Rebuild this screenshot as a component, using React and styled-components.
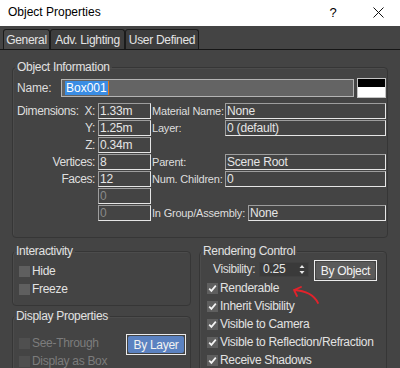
import React from 'react';
import styled, { createGlobalStyle } from 'styled-components';

const GlobalStyle = createGlobalStyle`
  html, body { margin: 0; padding: 0; background: #444444; }
  body {
    font-family: "Liberation Sans", Arial, sans-serif;
    font-size: 11px;
    letter-spacing: -0.2px;
    color: #dedede;
  }
  * { box-sizing: border-box; }
`;

const Window = styled.div`
  position: relative;
  width: 400px;
  height: 368px;
  overflow: hidden;
  background: #444444;
  white-space: nowrap;
`;

const TitleBar = styled.div`
  height: 26px;
  background: #ffffff;
  display: flex;
  align-items: center;
  padding-left: 8px;
  color: #000;
  letter-spacing: 0;
`;

const Title = styled.div`
  flex: 1;
  font-size: 12px;
  margin-top: -2px;
`;

const TitleButton = styled.div`
  width: ${p => p.$w}px;
  height: 26px;
  display: flex;
  align-items: center;
  justify-content: center;
  font-size: 13px;
  margin-top: -2px;
`;

const TabStrip = styled.div`
  height: 24px;
  display: flex;
  align-items: flex-end;
  padding-left: 3px;
  border-bottom: 1px solid #161616;
`;

const Tab = styled.div`
  width: ${p => p.$w}px;
  height: 20px;
  display: flex;
  align-items: center;
  justify-content: center;
  border: 1px solid #1b1b1b;
  border-bottom: none;
  border-radius: 3px 3px 0 0;
  background: ${p => (p.$active ? '#4a4a4a' : '#3d3d3d')};
  color: #e4e4e4;
  font-size: 12px;
  letter-spacing: -0.3px;
`;

const Pane = styled.div`
  padding: 10px 12px 0 12px;
`;

const Group = styled.fieldset`
  margin: 0;
  min-width: 0;
  border: 1px solid #363636;
  border-radius: 4px;
  box-shadow: inset 1px 1px 0 #4c4c4c;
  padding: ${p => p.$pad};
`;

const Legend = styled.legend`
  padding: 0 2px;
  margin-left: ${p => p.$shift}px;
  font-size: 12px;
  line-height: 14px;
  letter-spacing: -0.3px;
  color: #e2e2e2;
`;

const NameRow = styled.div`
  display: flex;
  align-items: center;
  height: 19px;
`;

const NameLabel = styled.div`
  width: 44px;
  font-size: 12px;
`;

const NameField = styled.div`
  width: 293px;
  height: 18px;
  background: #646464;
  border: 1px solid #b4b4b4;
  display: flex;
  align-items: center;
  padding-left: 3px;
  font-size: 12px;
  letter-spacing: 0;
  color: #fff;
`;

const Selection = styled.span`
  background: #3a8de4;
  line-height: 14px;
  padding: 0 1px;
`;

const Caret = styled.span`
  width: 1px;
  height: 14px;
  background: #e07a1f;
`;

const Swatch = styled.div`
  width: 29px;
  height: 20px;
  margin-left: 3px;
  border: 1px solid #c4c4c4;
  background: linear-gradient(#000 0 42%, #fff 42% 100%);
`;

const InfoGrid = styled.div`
  display: grid;
  grid-template-columns: 81px 53px 1fr;
  grid-auto-rows: 16px;
  row-gap: 1px;
  margin-top: 6px;
`;

const LeftLabel = styled.div`
  display: flex;
  justify-content: ${p => (p.$split ? 'space-between' : 'flex-end')};
  align-items: center;
  padding-right: 3px;
  font-size: 12px;
  letter-spacing: -0.4px;
`;

const Field = styled.div`
  height: 16px;
  border: 1px solid #9e9e9e;
  border-right-color: #e6e6e6;
  border-bottom-color: #e6e6e6;
  padding-left: 1px;
  font-size: 12px;
  line-height: 14px;
  letter-spacing: -0.2px;
  color: ${p => (p.$dim ? '#8a8a8a' : '#e6e6e6')};
  flex: ${p => (p.$grow ? 1 : 'none')};
  overflow: hidden;
`;

const RightCell = styled.div`
  display: flex;
  align-items: center;
  padding-left: 1px;
`;

const RightLabel = styled.div`
  width: ${p => p.$w}px;
  font-size: 11px;
  overflow: hidden;
`;

const LowerGrid = styled.div`
  display: grid;
  grid-template-columns: 179px 188px;
  column-gap: 8px;
  margin-top: 6px;
  align-items: start;
`;

const Column = styled.div`
  display: flex;
  flex-direction: column;
  gap: 3px;
`;

const CheckRow = styled.div`
  height: 18px;
  display: flex;
  align-items: center;
  font-size: 12px;
  letter-spacing: -0.3px;
  color: ${p => (p.$disabled ? '#7c7c7c' : '#e2e2e2')};
`;

const Box = styled.span`
  width: 11px;
  height: 11px;
  margin-right: 2px;
  flex: none;
  background: ${p => (p.$disabled ? '#4f4f4f' : '#5f5f5f')};
  display: flex;
  align-items: center;
  justify-content: center;
`;

const DisplayBody = styled.div`
  display: flex;
  align-items: flex-start;
`;

const Checks = styled.div`
  flex: 1;
  display: flex;
  flex-direction: column;
`;

const Button = styled.div`
  width: ${p => p.$w}px;
  height: ${p => p.$h}px;
  border: 1px solid #ececec;
  padding: 1px;
  margin-left: ${p => p.$ml || 0}px;
  margin-top: ${p => p.$mt || 0}px;
  flex: none;
`;

const ButtonFace = styled.div`
  height: 100%;
  border-radius: 2px;
  background: ${p => (p.$blue ? '#5b82c1' : '#5a5a5a')};
  display: flex;
  align-items: center;
  justify-content: center;
  font-size: 12px;
  letter-spacing: -0.3px;
  color: #f2f2f2;
`;

const VisRow = styled.div`
  height: 20px;
  display: flex;
  align-items: center;
`;

const VisLabel = styled.div`
  width: 46px;
  margin-left: 6px;
  font-size: 12px;
  letter-spacing: -0.4px;
`;

const Spinner = styled.div`
  width: 50px;
  height: 15px;
  background: #3a3a3a;
  border: 1px solid #404040;
  display: flex;
  align-items: center;
  justify-content: space-between;
  padding: 0 3px 0 3px;
  font-size: 12px;
  color: #e6e6e6;
`;

const Arrow = styled.svg`
  position: absolute;
  left: 0;
  top: 0;
  pointer-events: none;
`;

const Check = ({ checked, disabled, children }) => (
  <CheckRow $disabled={disabled}>
    <Box $disabled={disabled}>
      {checked && (
        <svg width="9" height="9" viewBox="0 0 9 9">
          <path d="M1.2 4.6 L3.4 6.9 L7.8 1.6" stroke="#f4f4f4" strokeWidth="1.7" fill="none" />
        </svg>
      )}
    </Box>
    {children}
  </CheckRow>
);

export default function App() {
  return (
    <>
      <GlobalStyle />
      <Window>
        <TitleBar>
          <Title>Object Properties</Title>
          <TitleButton $w={46}>?</TitleButton>
          <TitleButton $w={44}>
            <svg width="11" height="11" viewBox="0 0 11 11">
              <path d="M0.5 0.5 L10.5 10.5 M10.5 0.5 L0.5 10.5" stroke="#111" strokeWidth="1" fill="none" />
            </svg>
          </TitleButton>
        </TitleBar>
        <TabStrip>
          <Tab $w={47} $active>General</Tab>
          <Tab $w={75}>Adv. Lighting</Tab>
          <Tab $w={74}>User Defined</Tab>
        </TabStrip>
        <Pane>
          <Group $pad="4px 1px 16px 4px">
            <Legend $shift={-2}>Object Information</Legend>
            <NameRow>
              <NameLabel>Name:</NameLabel>
              <NameField>
                <Selection>Box001</Selection>
                <Caret />
              </NameField>
              <Swatch />
            </NameRow>
            <InfoGrid>
              <LeftLabel $split><span>Dimensions:</span><span>X:</span></LeftLabel>
              <Field>1.33m</Field>
              <RightCell><RightLabel $w={73}>Material Name:</RightLabel><Field $grow>None</Field></RightCell>

              <LeftLabel>Y:</LeftLabel>
              <Field>1.25m</Field>
              <RightCell><RightLabel $w={73}>Layer:</RightLabel><Field $grow>0 (default)</Field></RightCell>

              <LeftLabel>Z:</LeftLabel>
              <Field>0.34m</Field>
              <RightCell />

              <LeftLabel>Vertices:</LeftLabel>
              <Field>8</Field>
              <RightCell><RightLabel $w={73}>Parent:</RightLabel><Field $grow>Scene Root</Field></RightCell>

              <LeftLabel>Faces:</LeftLabel>
              <Field>12</Field>
              <RightCell><RightLabel $w={73}>Num. Children:</RightLabel><Field $grow>0</Field></RightCell>

              <LeftLabel />
              <Field $dim>0</Field>
              <RightCell />

              <LeftLabel />
              <Field $dim>0</Field>
              <RightCell><RightLabel $w={96}>In Group/Assembly:</RightLabel><Field $grow>None</Field></RightCell>
            </InfoGrid>
          </Group>

          <LowerGrid>
            <Column>
              <Group $pad="4px 4px 7px 6px">
                <Legend $shift={-5}>Interactivity</Legend>
                <Check>Hide</Check>
                <Check>Freeze</Check>
              </Group>
              <Group $pad="11px 4px 10px 6px">
                <Legend $shift={-5}>Display Properties</Legend>
                <DisplayBody>
                  <Checks>
                    <Check disabled>See-Through</Check>
                    <Check disabled>Display as Box</Check>
                  </Checks>
                  <Button $w={60} $h={21}>
                    <ButtonFace $blue>By Layer</ButtonFace>
                  </Button>
                </DisplayBody>
              </Group>
            </Column>
            <Group $pad="1px 4px 10px 7px">
              <Legend $shift={-6}>Rendering Control</Legend>
              <VisRow>
                <VisLabel>Visibility:</VisLabel>
                <Spinner>
                  <span>0.25</span>
                  <svg width="6" height="11" viewBox="0 0 6 11">
                    <path d="M3 1 L5.5 4 L0.5 4 Z M3 10 L5.5 7 L0.5 7 Z" fill="#e8e8e8" />
                  </svg>
                </Spinner>
                <Button $w={63} $h={21} $ml={5} $mt={3}>
                  <ButtonFace>By Object</ButtonFace>
                </Button>
              </VisRow>
              <Check checked>Renderable</Check>
              <Check checked>Inherit Visibility</Check>
              <Check checked>Visible to Camera</Check>
              <Check checked>Visible to Reflection/Refraction</Check>
              <Check checked>Receive Shadows</Check>
            </Group>
          </LowerGrid>
        </Pane>
        <Arrow width="400" height="368" viewBox="0 0 400 368">
          <path d="M294 290 Q312 291 318 303 M294 290 L301 287 M294 290 L297 296" stroke="#e3222b" strokeWidth="1.8" fill="none" strokeLinecap="round" />
        </Arrow>
      </Window>
    </>
  );
}
